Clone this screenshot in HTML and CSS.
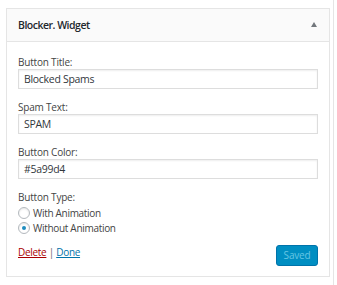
FILE: index.html
```html
<!DOCTYPE html>
<html>
<head>
<meta charset="utf-8">
<link rel="stylesheet" href="styles.css">
</head>
<body>
<div class="page">
  <div class="widget">
    <div class="widget-top">
      <span class="widget-title">Blocker. Widget</span>
      <span class="toggle"></span>
    </div>
    <div class="widget-inside">
      <div class="field">
        <label class="lbl">Button Title:</label>
        <div class="input">Blocked Spams</div>
      </div>
      <div class="field">
        <label class="lbl">Spam Text:</label>
        <div class="input">SPAM</div>
      </div>
      <div class="field">
        <label class="lbl">Button Color:</label>
        <div class="input">#5a99d4</div>
      </div>
      <div class="field radios">
        <label class="lbl">Button Type:</label>
        <div class="radio-row"><span class="radio"></span><span>With Animation</span></div>
        <div class="radio-row"><span class="radio checked"></span><span>Without Animation</span></div>
      </div>
      <div class="controls">
        <div class="links"><a class="delete">Delete</a> <span class="sep">|</span> <a class="done">Done</a></div>
        <div class="saved">Saved</div>
      </div>
    </div>
  </div>
</div>
</body>
</html>
```

FILE: styles.css
```css
html, body {
  margin: 0;
  padding: 0;
  background: #fff;
}
body {
  font-family: "Open Sans", "Noto Sans", sans-serif;
  font-size: 10px;
  color: #23282d;
}
.page {
  width: 334px;
  height: 285px;
  border-right: 1px solid #e5e5e5;
  padding: 8px 0 0 6px;
  box-sizing: border-box;
}
.widget {
  width: 324px;
  box-sizing: border-box;
  border: 1px solid #e5e5e5;
  background: #fff;
}
.widget-top {
  height: 32px;
  background: #fafafa;
  border-bottom: 1px solid #e5e5e5;
  display: flex;
  align-items: center;
  justify-content: space-between;
  padding: 0 12px 0 11px;
}
.widget-title {
  font-weight: 600;
  font-size: 10.5px;
  letter-spacing: -0.5px;
  color: #23282d;
}
.toggle {
  width: 0;
  height: 0;
  border-left: 3.5px solid transparent;
  border-right: 3.5px solid transparent;
  border-bottom: 5px solid #72777c;
  margin-top: -2px;
}
.widget-inside {
  padding: 14px 11px 10px 11px;
  display: flex;
  flex-direction: column;
}
.field {
  display: flex;
  flex-direction: column;
  margin-bottom: 12px;
}
.lbl {
  line-height: 13px;
  color: #444;
  font-size: 10px;
  letter-spacing: -0.2px;
}
.input {
  height: 20px;
  box-sizing: border-box;
  border: 1px solid #ddd;
  box-shadow: inset 0 1px 2px rgba(0,0,0,0.07);
  padding: 0 5px;
  line-height: 18px;
  font-size: 10.5px;
  letter-spacing: -0.3px;
  color: #32373c;
}
.radios {
  margin-bottom: 10px;
}
.radios .lbl {
  margin-bottom: 1px;
}
.radio-row {
  display: flex;
  align-items: center;
  gap: 3px;
  height: 15px;
  font-size: 10px;
  letter-spacing: -0.3px;
  color: #444;
}
.radio {
  width: 12px;
  height: 12px;
  box-sizing: border-box;
  border: 1px solid #b4b9be;
  border-radius: 50%;
  box-shadow: inset 0 1px 2px rgba(0,0,0,0.1);
  position: relative;
  flex: none;
}
.radio.checked::after {
  content: "";
  position: absolute;
  width: 4px;
  height: 4px;
  border-radius: 50%;
  background: #1e8cbe;
  left: 3px;
  top: 3px;
}
.controls {
  display: flex;
  justify-content: space-between;
  align-items: flex-start;
}
.links {
  font-size: 10px;
  letter-spacing: -0.3px;
  line-height: 14px;
}
.delete {
  color: #a00;
  text-decoration: underline;
}
.done {
  color: #0073aa;
  text-decoration: underline;
}
.sep {
  color: #666;
}
.saved {
  width: 42px;
  height: 21px;
  box-sizing: border-box;
  background: #008ec2;
  border: 1px solid #0073aa;
  border-radius: 3px;
  color: #66c6e4;
  font-size: 10px;
  letter-spacing: -0.2px;
  line-height: 19px;
  text-align: center;
}
```
